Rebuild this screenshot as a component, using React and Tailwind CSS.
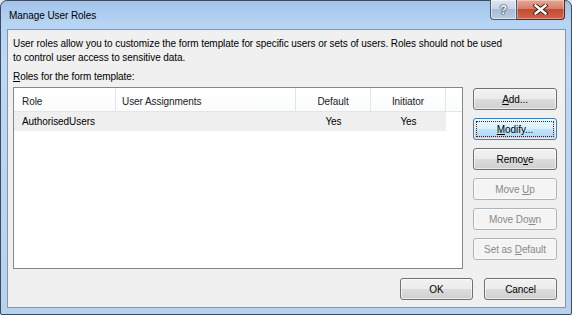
import React from 'react'

function U({ children }) {
  return <span className="underline underline-offset-[1px] decoration-[1px]">{children}</span>
}

function Btn({ children, w = 'w-[84px]', focused = false, disabled = false }) {
  let look = 'border-[#707070] bg-[linear-gradient(#f2f2f2,#ebebeb_50%,#dddddd_50%,#cfcfcf)] text-black'
  if (focused) look = 'border-[#3c7fb1] bg-[linear-gradient(#eaf6fd,#d9f0fc_50%,#bee6fd_50%,#a7d9f5)] text-black'
  if (disabled) look = 'border-[#adb2b5] bg-[#f4f4f4] text-[#8a8a8a]'
  return (
    <div className={`relative ${w} h-[22px] shrink-0 rounded-[3px] border flex items-center justify-center shadow-[inset_0_0_0_1px_rgba(255,255,255,0.6)] ${look}`}>
      {focused && <span className="absolute inset-[2px] border border-dotted border-[#5a1a1a]" />}
      <span className="relative">{children}</span>
    </div>
  )
}

function HeadCell({ children, className = '' }) {
  return <div className={`h-full border-r border-[#e5e5e5] flex items-center pt-[3px] ${className}`}>{children}</div>
}

export default function App() {
  return (
    <div className="w-[572px] h-[315px] bg-[#dfe6ee] font-['Liberation_Sans',Arial,sans-serif] text-[10px] tracking-[-0.07px] text-black select-none">
      <div className="relative w-full h-full rounded-t-[7px] rounded-b-[2px] border border-[#3b4a5f] bg-[linear-gradient(180deg,#a2c3e9,#b6d4f4_22px,#bdd8f3_60px,#b8d2ee)] flex flex-col pl-[6px] pr-[5px] pb-[6px]">
        {/* title bar */}
        <div className="h-[28px] shrink-0 flex items-center pl-[2px]">Manage User Roles</div>

        {/* caption buttons */}
        <div className="absolute top-[-1px] right-[6px] flex">
          <div className="w-[27px] h-[20px] rounded-bl-[4px] border border-t-0 border-[#4a5a70] bg-[linear-gradient(#dbe6f3,#c6d5e8_45%,#a9bdd6_50%,#b8cce3)] shadow-[inset_0_0_0_1px_rgba(255,255,255,0.5)] flex items-center justify-center">
            <span className="text-white font-bold text-[12px] leading-none [text-shadow:0_0_1px_#2a3646,0_0_1px_#2a3646,0_0_2px_#2a3646]">?</span>
          </div>
          <div className="w-[48px] h-[20px] rounded-br-[4px] border border-t-0 border-l-0 border-[#5c2418] bg-[linear-gradient(#e8a695,#d6806a_45%,#c44a31_50%,#d0654a)] shadow-[inset_0_0_0_1px_rgba(255,255,255,0.35)] flex items-center justify-center">
            <svg width="15" height="11" viewBox="0 0 15 11">
              <path d="M2.5 1.5 L12.5 9.5 M12.5 1.5 L2.5 9.5" stroke="#3a1a14" strokeWidth="4.2" strokeLinecap="square" />
              <path d="M2.5 1.5 L12.5 9.5 M12.5 1.5 L2.5 9.5" stroke="#ffffff" strokeWidth="2.4" strokeLinecap="square" />
            </svg>
          </div>
        </div>

        {/* client area */}
        <div className="flex-1 border border-[#8496ac] bg-[#f0f0f0] flex flex-col pl-[5px] pr-[7px] pt-[7px]">
          <p className="leading-[14px] whitespace-nowrap">
            User roles allow you to customize the form template for specific users or sets of users. Roles should not be used
            <br />
            to control user access to sensitive data.
          </p>
          <div className="mt-[5px] leading-[14px]"><U>R</U>oles for the form template:</div>

          <div className="mt-[3px] flex gap-[10px]">
            <div className="w-[450px] h-[182px] border border-[#828790] bg-white flex flex-col">
              <div className="h-[24px] flex border-b border-[#e5e5e5] bg-[linear-gradient(#ffffff,#fbfcfd)] text-[#222]">
                <HeadCell className="w-[102px] pl-[8px]">Role</HeadCell>
                <HeadCell className="w-[180px] pl-[6px]">User Assignments</HeadCell>
                <HeadCell className="w-[75px] justify-center">Default</HeadCell>
                <HeadCell className="w-[75px] justify-center">Initiator</HeadCell>
                <div className="flex-1" />
              </div>
              <div className="w-[432px] h-[19px] flex items-center bg-[#efefef]">
                <div className="w-[102px] pl-[8px]">AuthorisedUsers</div>
                <div className="w-[180px]" />
                <div className="w-[75px] text-center">Yes</div>
                <div className="w-[75px] text-center">Yes</div>
              </div>
            </div>

            <div className="pt-[1px] flex flex-col gap-[8px]">
              <Btn><U>A</U>dd...</Btn>
              <Btn focused><U>M</U>odify...</Btn>
              <Btn>Remo<U>v</U>e</Btn>
              <Btn disabled>Move <U>U</U>p</Btn>
              <Btn disabled>Move Do<U>w</U>n</Btn>
              <Btn disabled>Set as <U>D</U>efault</Btn>
            </div>
          </div>

          <div className="mt-[9px] flex justify-end gap-[11px] pr-[1px]">
            <Btn w="w-[73px]">OK</Btn>
            <Btn w="w-[73px]">Cancel</Btn>
          </div>
        </div>
      </div>
    </div>
  )
}
